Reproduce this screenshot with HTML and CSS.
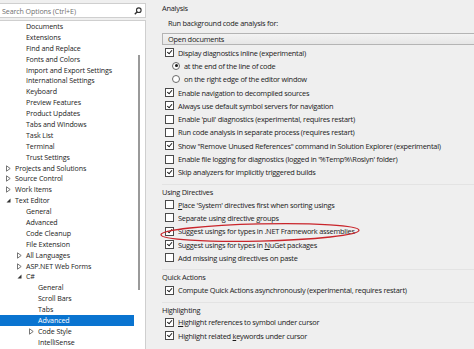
FILE: index.html
```html
<!DOCTYPE html>
<html>
<head>
<meta charset="utf-8">
<link rel="stylesheet" href="styles.css">
</head>
<body>
<div class="dialog">
  <div class="left">
    <div class="search">
      <span class="ph">Search Options (Ctrl+E)</span>
      <svg class="mag" width="8" height="8" viewBox="0 0 8 8"><circle cx="4.8" cy="3.2" r="2.3" fill="none" stroke="#333" stroke-width="1.1"/><path d="M3.2 4.8 L0.8 7.2" stroke="#333" stroke-width="1.4"/></svg>
    </div>
    <div class="tree">
      <div class="items">
        <div class="it l2">Documents</div>
        <div class="it l2">Extensions</div>
        <div class="it l2">Find and Replace</div>
        <div class="it l2">Fonts and Colors</div>
        <div class="it l2">Import and Export Settings</div>
        <div class="it l2">International Settings</div>
        <div class="it l2">Keyboard</div>
        <div class="it l2">Preview Features</div>
        <div class="it l2">Product Updates</div>
        <div class="it l2">Tabs and Windows</div>
        <div class="it l2">Task List</div>
        <div class="it l2">Terminal</div>
        <div class="it l2">Trust Settings</div>
        <div class="it l1"><svg class="tw" width="5" height="7" viewBox="0 0 5 7"><path d="M0.5 0.8 L4.2 3.5 L0.5 6.2 Z" fill="#fff" stroke="#666" stroke-width="0.9"/></svg>Projects and Solutions</div>
        <div class="it l1"><svg class="tw" width="5" height="7" viewBox="0 0 5 7"><path d="M0.5 0.8 L4.2 3.5 L0.5 6.2 Z" fill="#fff" stroke="#666" stroke-width="0.9"/></svg>Source Control</div>
        <div class="it l1"><svg class="tw" width="5" height="7" viewBox="0 0 5 7"><path d="M0.5 0.8 L4.2 3.5 L0.5 6.2 Z" fill="#fff" stroke="#666" stroke-width="0.9"/></svg>Work Items</div>
        <div class="it l1"><svg class="tw" width="5" height="7" viewBox="0 0 5 7"><path d="M4.5 1.5 L4.5 5.5 L0.5 5.5 Z" fill="#333"/></svg>Text Editor</div>
        <div class="it l2">General</div>
        <div class="it l2">Advanced</div>
        <div class="it l2">Code Cleanup</div>
        <div class="it l2">File Extension</div>
        <div class="it l2"><svg class="tw" width="5" height="7" viewBox="0 0 5 7"><path d="M0.5 0.8 L4.2 3.5 L0.5 6.2 Z" fill="#fff" stroke="#666" stroke-width="0.9"/></svg>All Languages</div>
        <div class="it l2"><svg class="tw" width="5" height="7" viewBox="0 0 5 7"><path d="M0.5 0.8 L4.2 3.5 L0.5 6.2 Z" fill="#fff" stroke="#666" stroke-width="0.9"/></svg>ASP.NET Web Forms</div>
        <div class="it l2"><svg class="tw" width="5" height="7" viewBox="0 0 5 7"><path d="M4.5 1.5 L4.5 5.5 L0.5 5.5 Z" fill="#333"/></svg>C#</div>
        <div class="it l3">General</div>
        <div class="it l3">Scroll Bars</div>
        <div class="it l3">Tabs</div>
        <div class="it l3 sel">Advanced</div>
        <div class="it l3"><svg class="tw" width="5" height="7" viewBox="0 0 5 7"><path d="M0.5 0.8 L4.2 3.5 L0.5 6.2 Z" fill="#fff" stroke="#666" stroke-width="0.9"/></svg>Code Style</div>
        <div class="it l3">IntelliSense</div>
      </div>
      <div class="thumb"></div>
    </div>
  </div>

  <div class="right">
    <div class="sec first">
      <div class="head">Analysis</div>
      <div class="label">Run background code analysis for:</div>
      <div class="combo">Open documents</div>
      <div class="row"><span class="cb on"></span>Display diagnostics inline (experimental)</div>
      <div class="row sub"><span class="rb on"></span>at the end of the line of code</div>
      <div class="row sub"><span class="rb"></span>on the right edge of the editor window</div>
      <div class="row"><span class="cb on"></span>Enable navigation to decompiled sources</div>
      <div class="row"><span class="cb on"></span>Always use default symbol servers for navigation</div>
      <div class="row"><span class="cb"></span>Enable 'pull' diagnostics (experimental, requires restart)</div>
      <div class="row"><span class="cb"></span>Run code analysis in separate process (requires restart)</div>
      <div class="row"><span class="cb on"></span>Show "Remove Unused References" command in Solution Explorer (experimental)</div>
      <div class="row"><span class="cb"></span>Enable file logging for diagnostics (logged in '%Temp%\Roslyn' folder)</div>
      <div class="row"><span class="cb on"></span>Skip analyzers for implicitly triggered builds</div>
    </div>
    <div class="sec">
      <div class="head">Using Directives</div>
      <div class="row"><span class="cb"></span><span><u>P</u>lace 'System' directives first when sorting usings</span></div>
      <div class="row"><span class="cb"></span>Separate using directive groups</div>
      <div class="row"><span class="cb on"></span>Suggest usings for types in .NET Framework assemblies</div>
      <div class="row"><span class="cb on"></span><span>Suggest usings for types in <u>N</u>uGet packages</span></div>
      <div class="row"><span class="cb"></span>Add missing using directives on paste</div>
    </div>
    <div class="sec">
      <div class="head">Quick Actions</div>
      <div class="row"><span class="cb on"></span>Compute Quick Actions asynchronously (experimental, requires restart)</div>
    </div>
    <div class="sec">
      <div class="head">Highlighting</div>
      <div class="row"><span class="cb on"></span><span><u>H</u>ighlight references to symbol under cursor</span></div>
      <div class="row"><span class="cb on"></span><span>Highlight related <u>k</u>eywords under cursor</span></div>
    </div>
  </div>
</div>
<svg class="mark" width="474" height="349" viewBox="0 0 474 349"><ellipse cx="260" cy="232.5" rx="99" ry="8.6" transform="rotate(-1.3 260 232.5)" fill="none" stroke="#c9252b" stroke-width="1.3"/></svg>
</body>
</html>
```
FILE: styles.css
```css
html, body {
  margin: 0;
  padding: 0;
}
body {
  width: 474px;
  height: 349px;
  overflow: hidden;
  background: #efefef;
  font-family: "Open Sans", "Noto Sans", sans-serif;
  font-size: 7.4px;
  letter-spacing: -0.25px;
  color: #1b1b1b;
  position: relative;
}
.dialog {
  display: flex;
  height: 349px;
}
.left {
  width: 146px;
  flex: none;
  display: flex;
  flex-direction: column;
  padding-top: 3px;
  box-sizing: border-box;
  font-size: 7.1px;
  letter-spacing: -0.1px;
}
.search {
  height: 13px;
  background: #fff;
  border: 1px solid #cfcfcf;
  border-left: none;
  display: flex;
  align-items: center;
  justify-content: space-between;
  padding: 0 3px 0 2px;
}
.ph {
  color: #707070;
}
.mag {
  display: block;
}
.tree {
  margin-top: 2px;
  flex: 1;
  background: #fff;
  border: 1px solid #cfcfcf;
  border-left: none;
  border-bottom: none;
  position: relative;
}
.items {
  width: 134px;
}
.it {
  height: 10.9px;
  line-height: 10.9px;
  white-space: nowrap;
  display: flex;
  align-items: center;
}
.l1 { padding-left: 15px; }
.l2 { padding-left: 26px; }
.l3 { padding-left: 38px; }
.tw {
  margin-left: -9px;
  margin-right: 4px;
  flex: none;
}
.sel {
  background: #0a74d0;
  color: #fff;
}
.thumb {
  position: absolute;
  left: 138px;
  top: 34px;
  width: 2px;
  height: 235px;
  background: #9a9a9a;
}
.right {
  flex: 1;
  padding-left: 16px;
  padding-top: 2px;
  white-space: nowrap;
  overflow: hidden;
}
.sec {
  margin-top: 5px;
  border-top: 1px solid #e3e3e3;
  padding-top: 1px;
}
.sec.first {
  margin-top: 0;
  border-top: none;
  padding-top: 0;
}
.head {
  height: 12px;
  line-height: 12px;
}
.label {
  margin-top: 3px;
  height: 12px;
  line-height: 12px;
  padding-left: 6px;
}
.combo {
  margin-top: 4px;
  height: 12px;
  line-height: 10px;
  border: 1px solid #b4b4b4;
  border-right: none;
  background: linear-gradient(#f3f3f3, #e6e6e6);
  padding-left: 5px;
  box-sizing: border-box;
  margin-right: -10px;
  margin-bottom: 1px;
}
.row {
  height: 13.3px;
  display: flex;
  align-items: center;
  padding-left: 3px;
}
.row.sub {
  padding-left: 10px;
}
.cb {
  width: 7px;
  height: 7px;
  border: 1px solid #4a4a4a;
  background: #fff;
  margin-right: 4px;
  flex: none;
  position: relative;
}
.cb.on::after {
  content: "";
  position: absolute;
  left: 2.2px;
  top: 0.2px;
  width: 2.2px;
  height: 4.4px;
  border: solid #1a1a1a;
  border-width: 0 1.3px 1.3px 0;
  transform: rotate(40deg);
}
.rb {
  width: 6px;
  height: 6px;
  border: 1px solid #6a6a6a;
  border-radius: 50%;
  background: #fff;
  margin-right: 4px;
  flex: none;
  position: relative;
}
.rb.on::after {
  content: "";
  position: absolute;
  left: 1.5px;
  top: 1.5px;
  width: 3px;
  height: 3px;
  border-radius: 50%;
  background: #1a1a1a;
}
u {
  text-decoration-thickness: 1px;
  text-underline-offset: 1px;
}
.mark {
  position: absolute;
  left: 0;
  top: 0;
  pointer-events: none;
}
```
